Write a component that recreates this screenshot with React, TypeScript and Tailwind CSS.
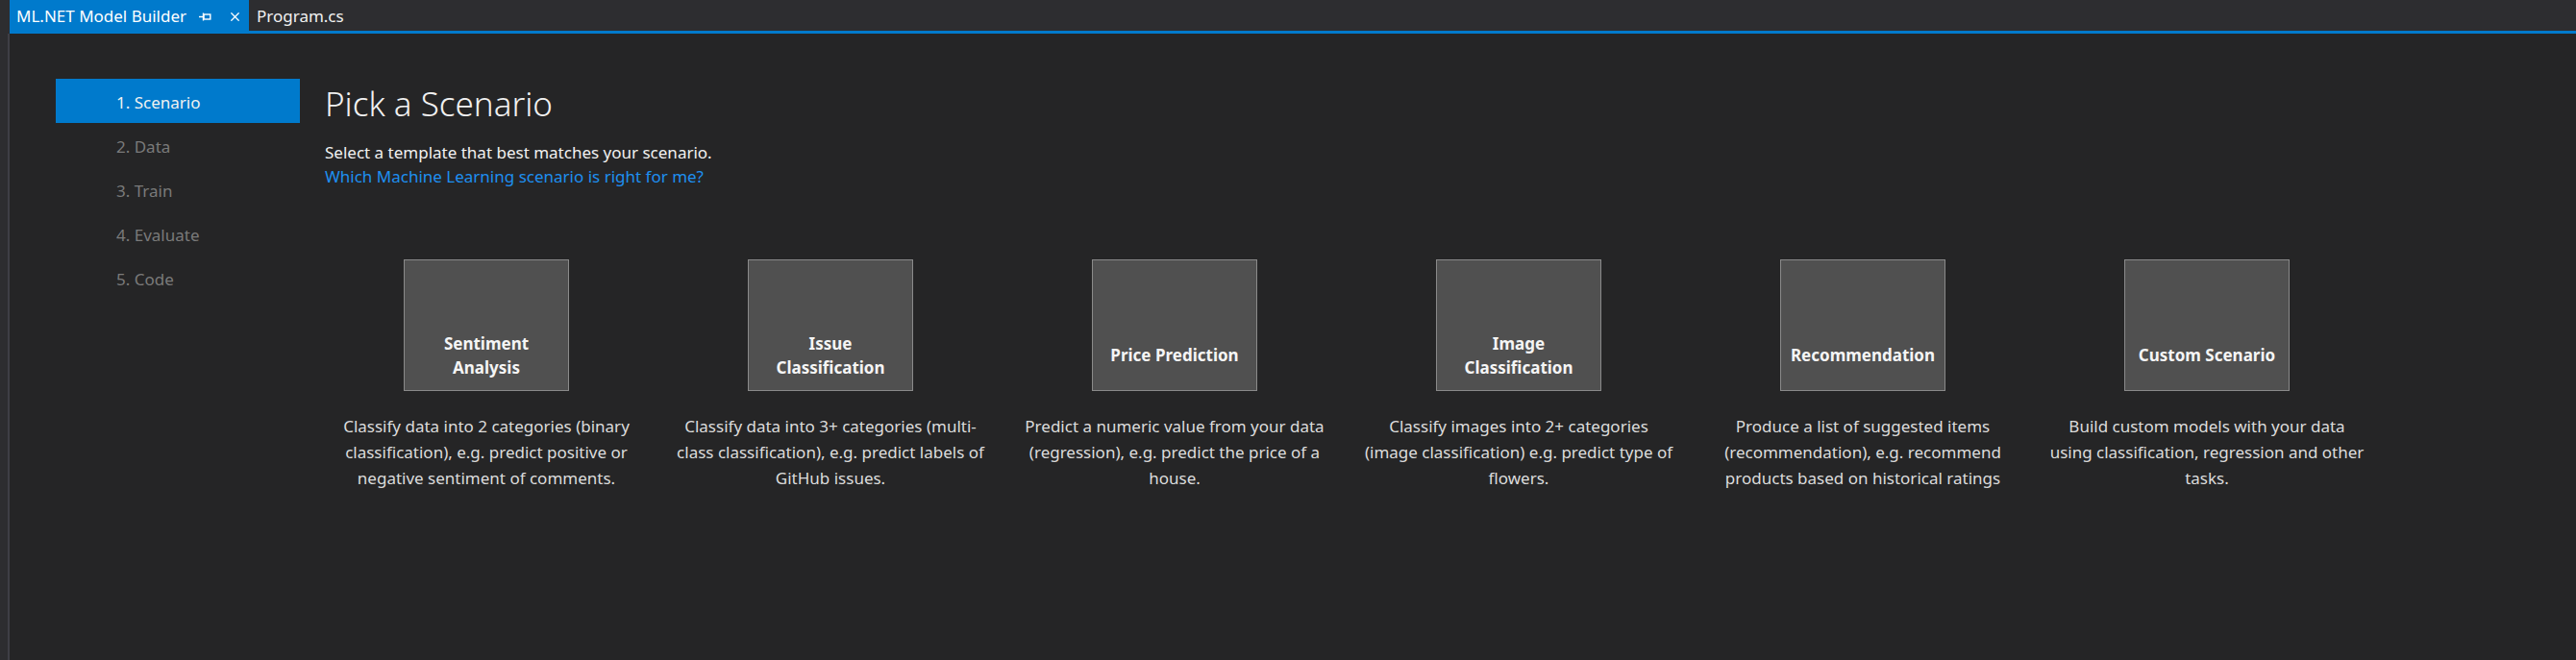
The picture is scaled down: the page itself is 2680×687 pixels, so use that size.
import { X } from 'lucide-react';

const steps = ['1. Scenario', '2. Data', '3. Train', '4. Evaluate', '5. Code'];

const scenarios = [
  {
    title: ['Sentiment', 'Analysis'],
    desc: ['Classify data into 2 categories (binary', 'classification), e.g. predict positive or', 'negative sentiment of comments.'],
  },
  {
    title: ['Issue', 'Classification'],
    desc: ['Classify data into 3+ categories (multi-', 'class classification), e.g. predict labels of', 'GitHub issues.'],
  },
  {
    title: ['Price Prediction'],
    desc: ['Predict a numeric value from your data', '(regression), e.g. predict the price of a', 'house.'],
  },
  {
    title: ['Image', 'Classification'],
    desc: ['Classify images into 2+ categories', '(image classification) e.g. predict type of', 'flowers.'],
  },
  {
    title: ['Recommendation'],
    desc: ['Produce a list of suggested items', '(recommendation), e.g. recommend', 'products based on historical ratings'],
  },
  {
    title: ['Custom Scenario'],
    desc: ['Build custom models with your data', 'using classification, regression and other', 'tasks.'],
  },
];

function PinIcon() {
  return (
    <svg width="13" height="9" viewBox="0 0 13 9" fill="none" stroke="#ffffff" strokeWidth="1.4">
      <path d="M0 4.5h4.5" />
      <path d="M4.5 0.5v8" />
      <rect x="5" y="2" width="6.8" height="5" />
    </svg>
  );
}

function ScenarioCard({ title, desc }: { title: string[]; desc: string[] }) {
  return (
    <div className="w-[358px] flex flex-col items-center">
      <div className="w-[172px] h-[137px] bg-[#505050] border border-[#8a8a8a] flex flex-col items-center justify-center pt-[62px]">
        {title.map((line) => (
          <span key={line} className="text-[17px] leading-[25px] font-bold text-[#f5f5f5]">
            {line}
          </span>
        ))}
      </div>
      <p className="mt-[23px] text-center text-[17px] leading-[27px] text-[#dcdcdc] whitespace-nowrap">
        {desc.map((line, i) => (
          <span key={i} className="block">
            {line}
          </span>
        ))}
      </p>
    </div>
  );
}

export default function App() {
  return (
    <div
      className="w-[2680px] h-[687px] bg-[#2d2d30] flex flex-col overflow-hidden"
      style={{ fontFamily: '"Noto Sans", "Open Sans", sans-serif' }}
    >
      {/* document tabs */}
      <div className="h-[32px] flex items-stretch pl-[10px] shrink-0">
        <div className="w-[249px] bg-[#007acc] flex items-center pl-[7px] text-white text-[17px]">
          <span className="pt-[2px]">ML.NET Model Builder</span>
          <span className="ml-[13px] mt-[3px]">
            <PinIcon />
          </span>
          <X className="ml-[17px] mt-[2px] w-[15px] h-[15px] text-white" strokeWidth={2} />
        </div>
        <div className="flex items-center pl-[8px] text-[#f1f1f1] text-[17px]">
          <span className="pt-[2px]">Program.cs</span>
        </div>
      </div>
      <div className="h-[3px] ml-[10px] bg-[#007acc] shrink-0" />

      <div className="flex-1 flex">
        <div className="w-[8px] bg-[#2d2d30]" />
        <div className="w-[2px] bg-[#3f3f46]" />
        <div className="flex-1 bg-[#252526] flex pt-[47px] pl-[48px]">
          {/* wizard steps */}
          <nav className="w-[254px] flex flex-col">
            {steps.map((step, i) => (
              <div
                key={step}
                className={`h-[46px] flex items-center pl-[63px] pt-[4px] text-[17px] ${
                  i === 0 ? 'bg-[#007acc] text-[#f1f1f1]' : 'text-[#7a7a7a]'
                }`}
              >
                {step}
              </div>
            ))}
          </nav>

          <main className="ml-[26px] pt-[3px] flex flex-col">
            <h1 className="text-[35px] leading-[46px] font-light text-[#f1f1f1]">Pick a Scenario</h1>
            <p className="mt-[15px] text-[17px] leading-[25px] text-[#f1f1f1]">
              Select a template that best matches your scenario.
            </p>
            <a className="text-[17px] leading-[25px] text-[#1e8ff0] cursor-pointer">
              Which Machine Learning scenario is right for me?
            </a>

            <div className="mt-[74px] -ml-[11px] flex">
              {scenarios.map((s) => (
                <ScenarioCard key={s.title.join(' ')} title={s.title} desc={s.desc} />
              ))}
            </div>
          </main>
        </div>
      </div>
    </div>
  );
}
